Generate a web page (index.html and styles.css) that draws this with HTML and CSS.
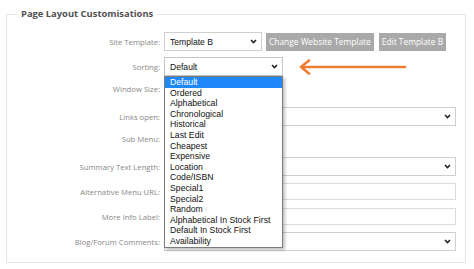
FILE: index.html
```html
<!DOCTYPE html>
<html lang="en">
<head>
    <meta charset="UTF-8">
    <meta name="viewport" content="width=device-width, initial-scale=1.0">
    <title>Page Layout Customisations</title>
    <link rel="stylesheet" href="styles.css">
</head>
<body>
    <fieldset class="panel">
        <legend>Page Layout Customisations</legend>

        <div class="row">
            <label class="lbl">Site Template:</label>
            <div class="ctl">
                <select class="sel sel-tpl"><option>Template B</option></select>
                <button type="button" class="btn">Change Website Template</button>
                <button type="button" class="btn btn-edit">Edit Template B</button>
            </div>
        </div>

        <div class="row">
            <label class="lbl">Sorting:</label>
            <div class="ctl">
                <div class="sort-wrap">
                    <select class="sel sel-sort"><option>Default</option></select>
                    <ul class="listbox">
                        <li class="on">Default</li>
                        <li>Ordered</li>
                        <li>Alphabetical</li>
                        <li>Chronological</li>
                        <li>Historical</li>
                        <li>Last Edit</li>
                        <li>Cheapest</li>
                        <li>Expensive</li>
                        <li>Location</li>
                        <li>Code/ISBN</li>
                        <li>Special1</li>
                        <li>Special2</li>
                        <li>Random</li>
                        <li>Alphabetical In Stock First</li>
                        <li>Default In Stock First</li>
                        <li>Availability</li>
                    </ul>
                </div>
                <svg class="pointer" width="110" height="16" viewBox="0 0 110 16">
                    <path d="M3 8H107M3 8L11 1.5M3 8L11 14.5" fill="none" stroke="#ed7d31" stroke-width="2.6" stroke-linecap="round"/>
                </svg>
            </div>
        </div>

        <div class="row row-top">
            <label class="lbl">Window Size:</label>
            <div class="ctl">
                <input type="text" class="txt txt-small">
            </div>
        </div>

        <div class="row">
            <label class="lbl">Links open:</label>
            <div class="ctl">
                <select class="sel sel-full"><option></option></select>
            </div>
        </div>

        <div class="row row-top">
            <label class="lbl">Sub Menu:</label>
            <div class="ctl">
                <input type="text" class="txt txt-small">
            </div>
        </div>

        <div class="row">
            <label class="lbl">Summary Text Length:</label>
            <div class="ctl">
                <select class="sel sel-full"><option></option></select>
            </div>
        </div>

        <div class="row">
            <label class="lbl">Alternative Menu URL:</label>
            <div class="ctl">
                <input type="text" class="txt">
            </div>
        </div>

        <div class="row">
            <label class="lbl">More Info Label:</label>
            <div class="ctl">
                <input type="text" class="txt">
            </div>
        </div>

        <div class="row">
            <label class="lbl">Blog/Forum Comments:</label>
            <div class="ctl">
                <select class="sel sel-full"><option></option></select>
            </div>
        </div>
    </fieldset>
</body>
</html>
```

FILE: styles.css
```css
body {
    margin: 0;
    padding: 6px 8px 0 6px;
    font-family: "Open Sans", Arial, sans-serif;
    background-color: #fff;
}
.panel {
    margin: 0;
    border: 1px solid #e4e4e4;
    padding: 10px 9px 11px 10px;
}
.panel legend {
    padding: 0 4px;
    font-size: 9.4px;
    font-weight: bold;
    line-height: 16px;
    color: #505050;
}
.row {
    display: flex;
    align-items: center;
    min-height: 19px;
    margin-bottom: 6px;
}
.row:last-child {
    margin-bottom: 0;
}
.row-top {
    align-items: flex-start;
}
.row-top .lbl {
    line-height: 14px;
}
.lbl {
    width: 147px;
    flex: none;
    box-sizing: border-box;
    padding-right: 4px;
    text-align: right;
    font-size: 7.7px;
    color: #878787;
}
.ctl {
    flex: 1;
    display: flex;
    align-items: center;
}
.sel {
    appearance: none;
    -webkit-appearance: none;
    box-sizing: border-box;
    height: 19px;
    margin: 0;
    padding: 0 14px 0 5px;
    border: 1px solid #cfcfcf;
    border-radius: 0;
    background: #fff url('data:image/svg+xml;utf8,<svg xmlns="http://www.w3.org/2000/svg" width="7" height="5" viewBox="0 0 7 5"><path d="M1 1l2.5 2.5L6 1" fill="none" stroke="%23222" stroke-width="1.6"/></svg>') no-repeat right 4px center;
    font-family: "Liberation Sans", Arial, sans-serif;
    font-size: 8.6px;
    color: #111;
}
.sel-tpl {
    width: 98px;
}
.sel-sort {
    width: 119px;
    border-color: #c4c4c4;
}
.sel-full {
    flex: 1;
}
.btn {
    height: 18px;
    margin-left: 4px;
    padding: 0 3px;
    border: none;
    background-color: #a9a9a9;
    color: #fff;
    font-family: "Open Sans", Arial, sans-serif;
    font-size: 8.4px;
    cursor: pointer;
}
.btn-edit {
    margin-left: 5px;
}
.txt {
    flex: 1;
    box-sizing: border-box;
    height: 17px;
    margin: 0;
    border: 1px solid #dcdcdc;
    padding: 0 4px;
}
.txt-small {
    flex: none;
    width: 60px;
}
.sort-wrap {
    position: relative;
    display: flex;
}
.listbox {
    position: absolute;
    top: 100%;
    left: 0;
    z-index: 2;
    width: 119px;
    box-sizing: border-box;
    margin: 0;
    padding: 0;
    list-style: none;
    border: 1px solid #7c7c7c;
    background-color: #fff;
    box-shadow: 2px 2px 3px rgba(0, 0, 0, 0.25);
}
.listbox li {
    height: 10.6px;
    line-height: 10.6px;
    padding-left: 5px;
    font-family: "Liberation Sans", Arial, sans-serif;
    font-size: 8.7px;
    color: #111;
    white-space: nowrap;
}
.listbox li.on {
    background-color: #1e88fb;
    color: #fff;
}
.pointer {
    margin-left: 15px;
    flex: none;
}
```
